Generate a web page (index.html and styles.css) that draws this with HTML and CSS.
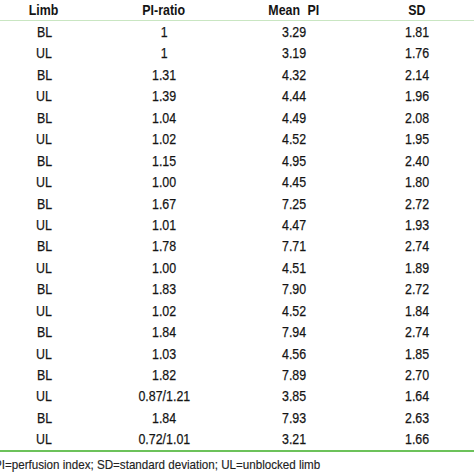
FILE: index.html
```html
<!DOCTYPE html>
<html>
<head>
<meta charset="utf-8">
<link rel="stylesheet" href="styles.css">
</head>
<body>
<div class="table">
  <div class="row head">
    <div><span>Limb</span></div><div><span>PI-ratio</span></div><div><span>Mean PI</span></div><div class="c4"><span>SD</span></div>
  </div>
  <div class="body">
    <div class="row"><div><span>BL</span></div><div><span>1</span></div><div><span>3.29</span></div><div class="c4"><span>1.81</span></div></div>
    <div class="row"><div><span>UL</span></div><div><span>1</span></div><div><span>3.19</span></div><div class="c4"><span>1.76</span></div></div>
    <div class="row"><div><span>BL</span></div><div><span>1.31</span></div><div><span>4.32</span></div><div class="c4"><span>2.14</span></div></div>
    <div class="row"><div><span>UL</span></div><div><span>1.39</span></div><div><span>4.44</span></div><div class="c4"><span>1.96</span></div></div>
    <div class="row"><div><span>BL</span></div><div><span>1.04</span></div><div><span>4.49</span></div><div class="c4"><span>2.08</span></div></div>
    <div class="row"><div><span>UL</span></div><div><span>1.02</span></div><div><span>4.52</span></div><div class="c4"><span>1.95</span></div></div>
    <div class="row"><div><span>BL</span></div><div><span>1.15</span></div><div><span>4.95</span></div><div class="c4"><span>2.40</span></div></div>
    <div class="row"><div><span>UL</span></div><div><span>1.00</span></div><div><span>4.45</span></div><div class="c4"><span>1.80</span></div></div>
    <div class="row"><div><span>BL</span></div><div><span>1.67</span></div><div><span>7.25</span></div><div class="c4"><span>2.72</span></div></div>
    <div class="row"><div><span>UL</span></div><div><span>1.01</span></div><div><span>4.47</span></div><div class="c4"><span>1.93</span></div></div>
    <div class="row"><div><span>BL</span></div><div><span>1.78</span></div><div><span>7.71</span></div><div class="c4"><span>2.74</span></div></div>
    <div class="row"><div><span>UL</span></div><div><span>1.00</span></div><div><span>4.51</span></div><div class="c4"><span>1.89</span></div></div>
    <div class="row"><div><span>BL</span></div><div><span>1.83</span></div><div><span>7.90</span></div><div class="c4"><span>2.72</span></div></div>
    <div class="row"><div><span>UL</span></div><div><span>1.02</span></div><div><span>4.52</span></div><div class="c4"><span>1.84</span></div></div>
    <div class="row"><div><span>BL</span></div><div><span>1.84</span></div><div><span>7.94</span></div><div class="c4"><span>2.74</span></div></div>
    <div class="row"><div><span>UL</span></div><div><span>1.03</span></div><div><span>4.56</span></div><div class="c4"><span>1.85</span></div></div>
    <div class="row"><div><span>BL</span></div><div><span>1.82</span></div><div><span>7.89</span></div><div class="c4"><span>2.70</span></div></div>
    <div class="row"><div><span>UL</span></div><div><span>0.87/1.21</span></div><div><span>3.85</span></div><div class="c4"><span>1.64</span></div></div>
    <div class="row"><div><span>BL</span></div><div><span>1.84</span></div><div><span>7.93</span></div><div class="c4"><span>2.63</span></div></div>
    <div class="row"><div><span>UL</span></div><div><span>0.72/1.01</span></div><div><span>3.21</span></div><div class="c4"><span>1.66</span></div></div>
  </div>
  <p class="note"><span>PI=perfusion index; SD=standard deviation; UL=unblocked limb</span></p>
</div>
</body>
</html>
```
FILE: styles.css
```css
html, body {
  margin: 0;
  padding: 0;
  background: #ffffff;
}
body {
  width: 474px;
  height: 474px;
  overflow: hidden;
  font-family: "Liberation Sans", Arial, sans-serif;
  color: #141414;
}
.table {
  width: 474px;
}
.row {
  display: grid;
  grid-template-columns: 88px 152px 108px 126px;
  height: 21.45px;
  align-items: center;
  font-size: 15.5px;
  line-height: 21.45px;
}
.row > div {
  text-align: center;
  white-space: nowrap;
}
/* condensed face: Liberation Sans narrowed horizontally */
.row span,
.note span {
  display: inline-block;
  transform: scaleX(0.8);
  -webkit-text-stroke: 0.25px #141414;
}
.row .c4 {
  padding-left: 12px;
}
.head {
  height: 20px;
  line-height: 20px;
  font-weight: bold;
  word-spacing: 5px;
  border-bottom: 1px solid #c9e6c2;
}
.head span {
  -webkit-text-stroke: 0;
}
.body {
  border-bottom: 2px solid #6cc25a;
}
.note {
  margin: 0;
  padding-top: 3px;
  font-size: 13.5px;
  line-height: 20px;
  color: #222;
  white-space: nowrap;
}
.note span {
  transform: scaleX(0.86);
  transform-origin: 0 50%;
  margin-left: -6px;
  -webkit-text-stroke: 0.15px #222;
}
```
